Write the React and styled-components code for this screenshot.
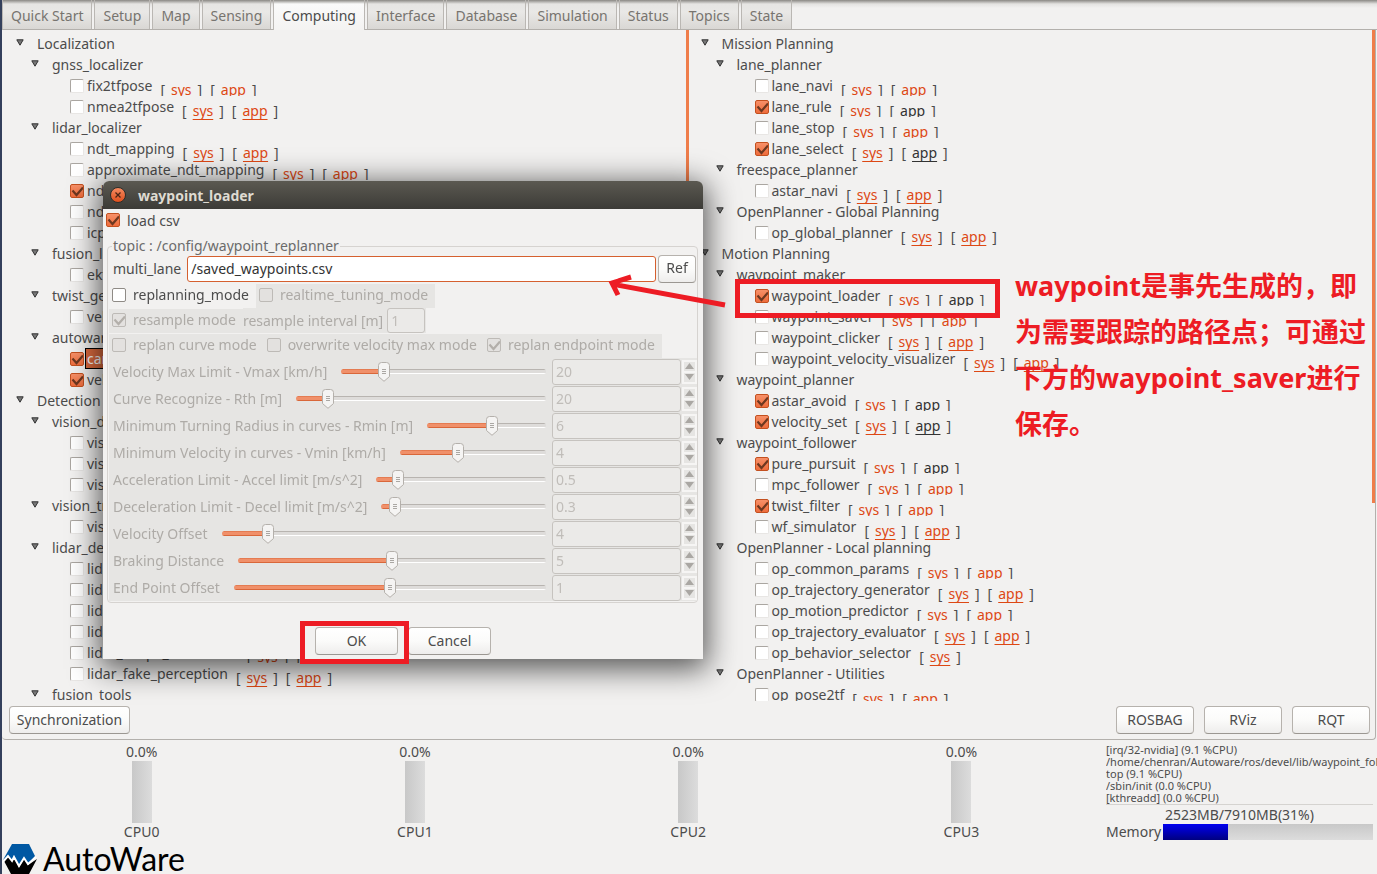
import React, { useEffect, useRef } from "react";
import styled, { createGlobalStyle, css } from "styled-components";

const tick = (color) =>
  `url("data:image/svg+xml,%3Csvg xmlns='http://www.w3.org/2000/svg' viewBox='0 0 14 14'%3E%3Cpath d='M2.500 6.500l4 4.500 6.500-7.500' fill='none' stroke='%23${color}' stroke-width='2.200'/%3E%3C/svg%3E")`;

const thumb = `url("data:image/svg+xml,%3Csvg xmlns='http://www.w3.org/2000/svg' viewBox='0 0 12 20'%3E%3Cpath d='M3.500.5h5a3 3 0 0 1 3 3v11L6 19.300.5 14.500v-11a3 3 0 0 1 3-3z' fill='%23f5f4f3' stroke='%23b4b0ab'/%3E%3Cpath d='M4 7.500h4M4 9.500h4M4 11.500h4' stroke='%23aaa7a3'/%3E%3C/svg%3E")`;

const GlobalStyle = createGlobalStyle`
  * { box-sizing: border-box; }
  body {
    margin: 0;
    background: #f2f1f0;
    color: #4c4c4c;
    font-family: "Noto Sans", "Noto Sans CJK SC", sans-serif;
    font-size: 14px;
  }
  button, input { font: inherit; color: inherit; }
`;

const Window = styled.div`
  position: relative;
  display: flex;
  flex-direction: column;
  height: 100vh;
  overflow: hidden;
  border-left: 2px solid #34405c;
`;

const Tabs = styled.nav`
  display: flex;
  gap: 2px;
  height: 30px;
  flex: none;
  border-bottom: 1px solid #b3b0ac;
  background: linear-gradient(#8a8884, #e4e3e1 4px, #f2f1f0 8px);
`;

const Tab = styled.button`
  height: 29px;
  padding: 2px 8px 0;
  border: 1px solid #bab7b3;
  border-width: 0 1px;
  background: linear-gradient(#8a8884, #e6e5e3 4px, #e9e8e6 12px, #d9d7d4);
  color: #77746f;
  white-space: nowrap;
  ${(p) =>
    p.$active &&
    css`
      height: 30px;
      padding-top: 0;
      background: linear-gradient(#8a8884, #fafafa 4px, #f4f3f2);
      color: #4c4c4c;
    `}
`;

const Panel = styled.main`
  display: flex;
  flex-direction: column;
  flex: 1;
  min-height: 0;
  margin-right: 1px;
  border: 1px solid #b3b0ac;
  border-width: 0 1px 1px 0;
  border-radius: 0 0 4px 4px;
`;

const Trees = styled.div`
  display: grid;
  grid-template-columns: 1fr 1fr;
  flex: 1;
  min-height: 0;
`;

const Tree = styled.div`
  overflow: hidden;
  padding: 3px 0 0 ${(p) => p.$inset}px;
  background: linear-gradient(#ef7d4a, #ef7d4a) no-repeat right top / 3px 473px;
`;

const Row = styled.div`
  display: flex;
  align-items: center;
  height: 21px;
  padding-left: ${(p) => p.$level * 15}px;
  white-space: nowrap;
`;

const Arrow = styled.svg`
  width: 8px;
  height: 7px;
  margin: 0 13px 2px 0;
`;

const Check = styled.input`
  appearance: none;
  flex: none;
  width: 14px;
  height: 14px;
  margin: 0;
  border: 1px solid #8f8b86;
  border-radius: 2px;
  background: #fff;
  &:checked {
    border-color: #c3501f;
    background: ${tick("6e3820")} center / 14px 14px, linear-gradient(#f79068, #ee6c3c);
  }
  &:disabled {
    border-color: #bdbab6;
    background: #e3e1df;
  }
  &:disabled:checked {
    background: ${tick("b3afaa")} center / 14px 14px, #e3e1df;
  }
`;

const TreeCheck = styled(Check)`
  margin: 1px 3px 0 9px;
  border-color: #aaa6a1 #e8e6e4 #e8e6e4 #aaa6a1;
`;

const NodeLabel = styled.label`
  ${(p) =>
    p.$selected &&
    css`
      margin-left: -2px;
      padding-left: 1px;
      border: 1px solid #000;
      background: #dc6b3f;
      color: #fff;
    `}
`;

const Links = styled.span`
  display: flex;
  gap: 8px;
  height: 21px;
  padding: 5px 0 0 8px;
  line-height: 20px;
  overflow: ${(p) => (p.$clip ? "hidden" : "visible")};
`;

const NodeLink = styled.a`
  margin: 0 6px;
  color: ${(p) => (p.$dark ? "#333" : "#dd4814")};
  text-underline-offset: 3px;
  text-decoration-skip-ink: none;
`;

const ButtonRow = styled.div`
  display: flex;
  gap: 10px;
  padding: 5px 5px 5px 7px;
`;

const Button = styled.button`
  min-width: ${(p) => p.$width || 78}px;
  height: 28px;
  padding: 0 4px 2px;
  border: 1px solid #b6b2ad;
  border-bottom-color: #9b9792;
  border-radius: 4px;
  background: linear-gradient(#fff, #fbfbfa 50%, #eeedec);
`;

const Spacer = styled.div`
  flex: 1;
`;

const Status = styled.footer`
  display: flex;
  flex: none;
  height: 104px;
  padding-left: 3px;
`;

const Cpus = styled.div`
  display: grid;
  grid-template-columns: repeat(4, 1fr);
  flex: 1;
  padding-top: 3px;
`;

const Cpu = styled.div`
  display: flex;
  flex-direction: column;
  align-items: center;
  line-height: 18px;
`;

const CpuBar = styled.div`
  width: 20px;
  height: 62px;
  background: linear-gradient(90deg, #c8c8c8, #dcdcdc);
`;

const Info = styled.div`
  width: 271px;
  margin-left: 8px;
  padding: 4px 4px 0 0;
`;

const Processes = styled.div`
  margin-right: -4px;
  overflow: hidden;
  font-size: 11px;
  line-height: 12px;
  white-space: nowrap;
`;

const MemoryText = styled.div`
  border-top: 1px solid #d5d3d0;
  line-height: 19px;
  text-align: center;
`;

const Memory = styled.div`
  display: flex;
  line-height: 16px;
`;

const MemoryBar = styled.div`
  flex: 1;
  height: 16px;
  margin-left: 2px;
  background: linear-gradient(#c8c8c8, #dcdcdc);
`;

const MemoryUsed = styled.div`
  height: 100%;
  background: linear-gradient(#0000f0, #000080);
`;

const Brand = styled.div`
  display: flex;
  flex: none;
  align-items: center;
  gap: 5px;
  height: 30px;
  color: #000;
  font-family: Lato, sans-serif;
  font-size: 32px;
  line-height: 30px;
`;

const Dialog = styled.section`
  position: absolute;
  top: 181px;
  left: 101px;
  width: 600px;
  padding-bottom: 4px;
  border-radius: 6px 6px 0 0;
  background: #f2f1f0;
  box-shadow: 0 6px 30px 4px rgba(0, 0, 0, 0.65);
`;

const TitleBar = styled.header`
  display: flex;
  align-items: center;
  gap: 12px;
  height: 28px;
  padding-left: 7px;
  border-radius: 6px 6px 0 0;
  background: linear-gradient(#5b5951, #3c3b37);
  color: #dfdbd2;
  font-weight: bold;
`;

const CloseButton = styled.button`
  display: flex;
  width: 16px;
  height: 16px;
  padding: 0;
  border: 1px solid #2f2e2a;
  border-radius: 50%;
  background: linear-gradient(#f58a60, #df4f1d);
`;

const Option = styled.label`
  display: flex;
  align-items: center;
  gap: 7px;
  height: 24px;
  padding: 0 7px 2px 3px;
  white-space: nowrap;
  ${(p) =>
    p.$disabled &&
    css`
      background: #e6e5e3;
      color: #aeaba7;
    `}
`;

const Group = styled.fieldset`
  min-width: 0;
  margin: 4px 5px 0 4px;
  padding: 0 0 1px 1px;
  border: 1px solid #d6d3d0;
  border-radius: 4px;
`;

const Legend = styled.legend`
  margin-left: 3px;
  padding: 0 1px;
  line-height: 18px;
  color: #6b6b6b;
`;

const Field = styled.div`
  display: flex;
  align-items: center;
  gap: 2px;
  height: 28px;
  padding: 0 1px 1px 4px;
`;

const FieldLabel = styled.label`
  padding-right: 4px;
`;

const OptionRow = styled.div`
  display: flex;
  align-items: center;
  height: 25px;
`;

const Entry = styled.input`
  min-width: 0;
  height: 26px;
  padding: 0 3px 1px;
  border: 1px solid #c6c3bf;
  border-radius: 3px;
  background: #fff;
  &:disabled {
    background: #ebeae8;
    color: #c0bdb9;
  }
`;

const PathEntry = styled(Entry)`
  flex: 1;
  border-color: #d5602f;
  outline: none;
  color: #333;
`;

const IntervalLabel = styled.label`
  display: flex;
  align-items: center;
  gap: 4px;
  padding-right: 1px;
  background: #e6e5e3;
  color: #aeaba7;
  white-space: nowrap;
`;

const IntervalEntry = styled(Entry)`
  width: 38px;
  height: 25px;
`;

const Param = styled.div`
  display: flex;
  align-items: center;
  height: 27px;
  padding-left: 4px;
  background: #e6e5e3;
  color: #aeaba7;
  white-space: nowrap;
`;

const Slider = styled.input`
  appearance: none;
  flex: 1;
  min-width: 0;
  height: 20px;
  margin: 0 6px 0 14px;
  background: transparent;
  &::-webkit-slider-runnable-track {
    height: 5px;
    border-radius: 3px;
    background: linear-gradient(#d9673a, #f0906a 1px, #f0906a 4px, #d9673a 4px) no-repeat 0 0 /
        ${(p) => p.value}% 5px,
      linear-gradient(#b8b4b0 0 1px, #dedcda 1px 4px, #fff 4px);
  }
  &::-webkit-slider-thumb {
    appearance: none;
    width: 12px;
    height: 20px;
    margin-top: -7px;
    background: ${thumb} center / 12px 20px no-repeat;
  }
`;

const ParamEntry = styled(Entry)`
  width: 129px;
`;

const Spin = styled.div`
  display: flex;
  flex-direction: column;
  gap: 2px;
  padding: 2px;
  margin-left: 1px;
  background: #f6f5f4;
`;

const SpinButton = styled.button`
  display: flex;
  align-items: center;
  justify-content: center;
  width: 11px;
  height: 9px;
  padding: 0;
  border: 0;
  background: #e6e5e3;
`;

const Actions = styled.div`
  display: flex;
  justify-content: center;
  gap: 10px;
  padding: 24px 0 0;
`;

const Highlight = styled.div`
  position: absolute;
  top: ${(p) => p.$top}px;
  left: ${(p) => p.$left}px;
  width: ${(p) => p.$width}px;
  height: ${(p) => p.$height}px;
  border: 5px solid #ed1c24;
  pointer-events: none;
`;

const Pointer = styled.svg`
  position: absolute;
  top: 270px;
  left: 600px;
  width: 130px;
  height: 40px;
  pointer-events: none;
`;

const Note = styled.div`
  position: absolute;
  top: 263px;
  left: 1013px;
  color: #ed1c24;
  font-size: 27px;
  font-weight: bold;
  line-height: 46px;
  white-space: nowrap;
`;

const tabs = ["Quick Start", "Setup", "Map", "Sensing", "Computing", "Interface", "Database", "Simulation", "Status", "Topics", "State"];

// [level, name, { on, links, dark, clip, selected }]
const leftNodes = [
  [0, "Localization"],
  [1, "gnss_localizer"],
  [2, "fix2tfpose", { clip: true }],
  [2, "nmea2tfpose"],
  [1, "lidar_localizer"],
  [2, "ndt_mapping"],
  [2, "approximate_ndt_mapping", { clip: true }],
  [2, "ndt_matching", { on: true, links: [] }],
  [2, "ndt_monitor", { links: [] }],
  [2, "icp_matching", { links: [] }],
  [1, "fusion_localizer"],
  [2, "ekf_localizer", { links: [] }],
  [1, "twist_generator"],
  [2, "vehicle_status", { links: [] }],
  [1, "autoware_connector"],
  [2, "can_status", { on: true, selected: true, links: [] }],
  [2, "vel_pose_connect", { on: true, links: [] }],
  [0, "Detection"],
  [1, "vision_detector"],
  [2, "vision_yolo2", { links: [] }],
  [2, "vision_yolo3", { links: [] }],
  [2, "vision_ssd", { links: [] }],
  [1, "vision_tracker"],
  [2, "vision_track", { links: [] }],
  [1, "lidar_detector"],
  [2, "lidar_cluster", { links: [] }],
  [2, "lidar_contour", { links: [] }],
  [2, "lidar_track", { links: [] }],
  [2, "lidar_detect", { links: [] }],
  [2, "lidar_shape_estimation", { clip: true }],
  [2, "lidar_fake_perception"],
  [1, "fusion_tools"],
];

const rightNodes = [
  [0, "Mission Planning"],
  [1, "lane_planner"],
  [2, "lane_navi", { clip: true }],
  [2, "lane_rule", { on: true, dark: true, clip: true }],
  [2, "lane_stop", { clip: true }],
  [2, "lane_select", { on: true, dark: true }],
  [1, "freespace_planner"],
  [2, "astar_navi"],
  [1, "OpenPlanner - Global Planning"],
  [2, "op_global_planner"],
  [0, "Motion Planning"],
  [1, "waypoint_maker"],
  [2, "waypoint_loader", { on: true, dark: true, clip: true }],
  [2, "waypoint_saver", { clip: true }],
  [2, "waypoint_clicker"],
  [2, "waypoint_velocity_visualizer"],
  [1, "waypoint_planner"],
  [2, "astar_avoid", { on: true, dark: true, clip: true }],
  [2, "velocity_set", { on: true, dark: true }],
  [1, "waypoint_follower"],
  [2, "pure_pursuit", { on: true, dark: true, clip: true }],
  [2, "mpc_follower", { clip: true }],
  [2, "twist_filter", { on: true, clip: true }],
  [2, "wf_simulator"],
  [1, "OpenPlanner - Local planning"],
  [2, "op_common_params", { clip: true }],
  [2, "op_trajectory_generator"],
  [2, "op_motion_predictor", { clip: true }],
  [2, "op_trajectory_evaluator"],
  [2, "op_behavior_selector", { links: ["sys"] }],
  [1, "OpenPlanner - Utilities"],
  [2, "op_pose2tf", { clip: true }],
];

const params = [
  ["Velocity Max Limit - Vmax [km/h]", 19, "20"],
  ["Curve Recognize - Rth [m]", 11, "20"],
  ["Minimum Turning Radius in curves - Rmin [m]", 55, "6"],
  ["Minimum Velocity in curves - Vmin [km/h]", 39, "4"],
  ["Acceleration Limit - Accel limit [m/s^2]", 10, "0.5"],
  ["Deceleration Limit - Decel limit [m/s^2]", 5, "0.3"],
  ["Velocity Offset", 13, "4"],
  ["Braking Distance", 50, "5"],
  ["End Point Offset", 50, "1"],
];

const processes = [
  "[irq/32-nvidia] (9.1 %CPU)",
  "/home/chenran/Autoware/ros/devel/lib/waypoint_follower",
  "top (9.1 %CPU)",
  "/sbin/init (0.0 %CPU)",
  "[kthreadd] (0.0 %CPU)",
];

function TreeNode({ node }) {
  const [level, name, opts = {}] = node;
  if (level < 2) {
    return (
      <Row $level={level}>
        <Arrow viewBox="0 0 8 7">
          <path d="M.8.8h6.400L4 6.200z" fill="#777" stroke="#333" />
        </Arrow>
        {name}
      </Row>
    );
  }
  const links = opts.links || ["sys", "app"];
  return (
    <Row $level={3}>
      <TreeCheck type="checkbox" id={name} defaultChecked={opts.on} />
      <NodeLabel htmlFor={name} $selected={opts.selected}>{name}</NodeLabel>
      <Links $clip={opts.clip}>
        {links.map((link) => (
          <span key={link}>
            [<NodeLink href="#" $dark={link === "app" && opts.dark}>{link}</NodeLink>]
          </span>
        ))}
      </Links>
    </Row>
  );
}

function OptionCheck({ text, checked, disabled }) {
  return (
    <Option $disabled={disabled}>
      <Check type="checkbox" defaultChecked={checked} disabled={disabled} />
      {text}
    </Option>
  );
}

function ParamRow({ name, position, value }) {
  return (
    <Param>
      <label htmlFor={name}>{name}</label>
      <Slider type="range" id={name} value={position} disabled readOnly />
      <ParamEntry type="text" aria-label={name} defaultValue={value} disabled />
      <Spin>
        <SpinButton aria-label="Increase" disabled>
          <svg width="9" height="6"><path d="M0 6L4.500 0 9 6z" fill="#aaa7a3" /></svg>
        </SpinButton>
        <SpinButton aria-label="Decrease" disabled>
          <svg width="9" height="6"><path d="M0 0L4.500 6 9 0z" fill="#aaa7a3" /></svg>
        </SpinButton>
      </Spin>
    </Param>
  );
}

function WaypointDialog() {
  const path = useRef(null);

  // put the caret before the file extension
  useEffect(() => {
    const end = path.current.value.lastIndexOf(".") + 1;
    path.current.focus();
    path.current.setSelectionRange(end, end);
  }, []);

  return (
    <Dialog role="dialog" aria-label="waypoint_loader">
      <TitleBar>
        <CloseButton aria-label="Close">
          <svg width="14" height="14"><path d="M4.500 4.500l5 5M9.500 4.500l-5 5" stroke="#4a2415" strokeWidth="1.300" /></svg>
        </CloseButton>
        waypoint_loader
      </TitleBar>
      <OptionCheck text="load csv" checked />
      <Group>
        <Legend>topic : /config/waypoint_replanner</Legend>
        <Field>
          <FieldLabel htmlFor="multi_lane">multi_lane</FieldLabel>
          <PathEntry ref={path} type="text" id="multi_lane" defaultValue="/saved_waypoints.csv" />
          <Button $width={38}>Ref</Button>
        </Field>
        <OptionRow>
          <OptionCheck text="replanning_mode" />
          <OptionCheck text="realtime_tuning_mode" disabled />
        </OptionRow>
        <OptionRow>
          <OptionCheck text="resample mode" checked disabled />
          <IntervalLabel>
            resample interval [m]
            <IntervalEntry type="text" defaultValue="1" disabled />
          </IntervalLabel>
        </OptionRow>
        <OptionRow>
          <OptionCheck text="replan curve mode" disabled />
          <OptionCheck text="overwrite velocity max mode" disabled />
          <OptionCheck text="replan endpoint mode" checked disabled />
        </OptionRow>
        {params.map(([name, position, value]) => (
          <ParamRow key={name} name={name} position={position} value={value} />
        ))}
      </Group>
      <Actions>
        <Button $width={83}>OK</Button>
        <Button $width={83}>Cancel</Button>
      </Actions>
    </Dialog>
  );
}

function Logo() {
  return (
    <svg width="36" height="30" viewBox="0 0 36 30">
      <path d="M10 0h17l6 12-7 8-4-6-5 8-5-9-2 3-4-4-5 4z" fill="#0058a3" />
      <path d="M2 17l4-4 4 4 2-3 5 9 5-8 4 6 9-6-8 15H9z" fill="#000" />
      <path d="M0 19l6-7 4 5 2-4 5 9 5-8 4 6 8-7" fill="none" stroke="#fff" strokeWidth="2" />
    </svg>
  );
}

export default function App() {
  return (
    <>
      <GlobalStyle />
      <Window>
        <Tabs>
          {tabs.map((tab) => (
            <Tab key={tab} $active={tab === "Computing"}>{tab}</Tab>
          ))}
        </Tabs>
        <Panel>
          <Trees>
            <Tree $inset={14}>
              {leftNodes.map((node) => <TreeNode key={node[1]} node={node} />)}
            </Tree>
            <Tree $inset={12}>
              {rightNodes.map((node) => <TreeNode key={node[1]} node={node} />)}
            </Tree>
          </Trees>
          <ButtonRow>
            <Button $width={121}>Synchronization</Button>
            <Spacer />
            <Button>ROSBAG</Button>
            <Button>RViz</Button>
            <Button>RQT</Button>
          </ButtonRow>
        </Panel>
        <Status>
          <Cpus>
            {[0, 1, 2, 3].map((n) => (
              <Cpu key={n}>
                <span>0.0%</span>
                <CpuBar />
                <span>CPU{n}</span>
              </Cpu>
            ))}
          </Cpus>
          <Info>
            <Processes>
              {processes.map((line) => <div key={line}>{line}</div>)}
            </Processes>
            <MemoryText>2523MB/7910MB(31%)</MemoryText>
            <Memory>
              <span>Memory</span>
              <MemoryBar>
                <MemoryUsed style={{ width: "31%" }} />
              </MemoryBar>
            </Memory>
          </Info>
        </Status>
        <Brand>
          <Logo />
          AutoWare
        </Brand>
        <WaypointDialog />
        <Highlight $top={279} $left={733} $width={265} $height={39} />
        <Highlight $top={621} $left={298} $width={109} $height={43} />
        <Pointer viewBox="0 0 130 40">
          <path d="M123 35L10 14M29 7L10 13l6 12" fill="none" stroke="#ed1c24" strokeWidth="5" />
        </Pointer>
        <Note>
          <div>waypoint是事先生成的，即</div>
          <div>为需要跟踪的路径点；可通过</div>
          <div>下方的waypoint_saver进行</div>
          <div>保存。</div>
        </Note>
      </Window>
    </>
  );
}
